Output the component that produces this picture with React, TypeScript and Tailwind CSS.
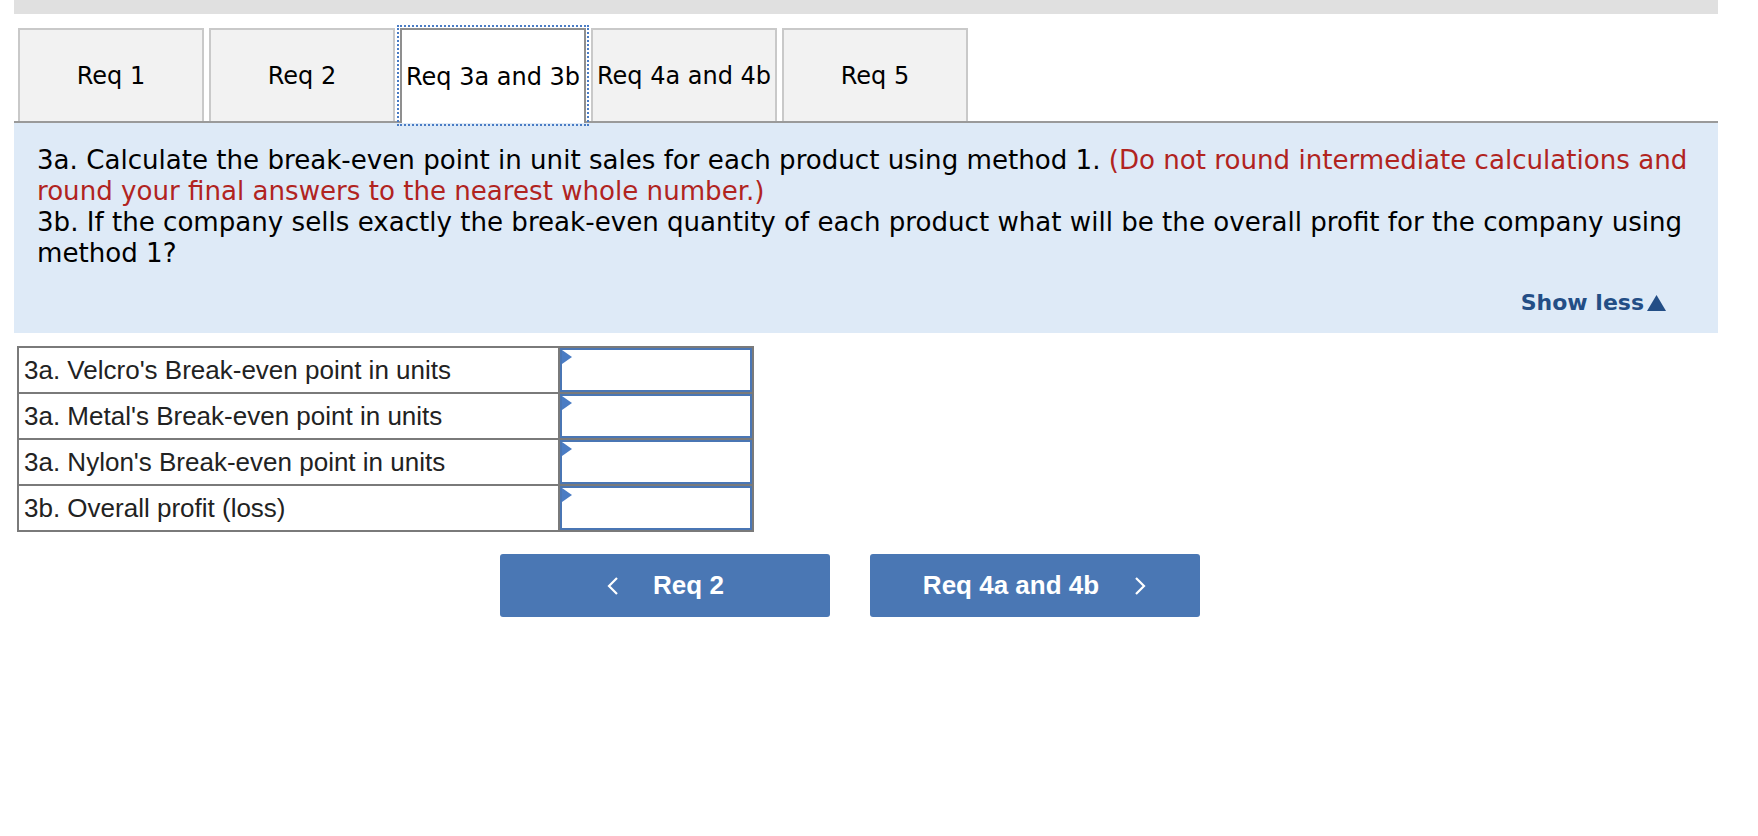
import React from 'react';

const tabs = ['Req 1', 'Req 2', 'Req 3a and 3b', 'Req 4a and 4b', 'Req 5'];
const activeTab = 2;

const rows = [
  "3a. Velcro's Break-even point in units",
  "3a. Metal's Break-even point in units",
  "3a. Nylon's Break-even point in units",
  '3b. Overall profit (loss)',
];

const ChevronLeft = () => (
  <svg width="14" height="20" viewBox="0 0 14 20" fill="none" stroke="currentColor" strokeWidth={2.2}>
    <path d="M11 2 L3 10 L11 18" />
  </svg>
);

const ChevronRight = () => (
  <svg width="14" height="20" viewBox="0 0 14 20" fill="none" stroke="currentColor" strokeWidth={2.2}>
    <path d="M3 2 L11 10 L3 18" />
  </svg>
);

export default function App() {
  return (
    <div className="w-[1758px] min-h-[836px] bg-white">
      <div className="ml-[14px] w-[1704px]">
        <div className="h-[14px] bg-[#e0e0e0]" />

        {/* tab strip */}
        <div className="mt-[14px] flex gap-[5px] pl-[4px] border-b-2 border-[#9a9a9a] font-['DejaVu_Sans',Verdana,sans-serif] text-[24px] text-black">
          {tabs.map((t, i) =>
            i === activeTab ? (
              <div
                key={t}
                className="relative z-10 -mb-[2px] flex h-[95px] w-[186px] items-center justify-center border-2 border-b-0 border-[#8f8f8f] bg-white outline-2 outline-dotted outline-[#4a7cc4] outline-offset-[1px] whitespace-nowrap"
              >
                {t}
              </div>
            ) : (
              <div
                key={t}
                className="flex h-[93px] w-[186px] items-center justify-center border-2 border-b-0 border-[#c9c9c9] bg-[#f2f2f2] whitespace-nowrap"
              >
                {t}
              </div>
            )
          )}
        </div>

        {/* instructions */}
        <div className="bg-[#deeaf7] pl-[23px] pr-[10px] pt-[22px] pb-[15px] font-['DejaVu_Sans',Verdana,sans-serif]">
          <p className="text-[26.1px] leading-[31px] text-black">
            3a. Calculate the break-even point in unit sales for each product using method 1.{' '}
            <span className="text-[#b1241f]">
              (Do not round intermediate calculations and round your final answers to the nearest whole number.)
            </span>
            <br />
            3b. If the company sells exactly the break-even quantity of each product what will be the overall profit for the company using method 1?
          </p>
          <div className="mt-[18px] flex justify-end pr-[42px]">
            <button className="flex items-center gap-[3px] text-[22px] leading-[31px] font-bold text-[#234e86]">
              Show less
              <svg width="19" height="16" viewBox="0 0 19 16">
                <path d="M9.5 0 L19 16 L0 16 Z" fill="currentColor" />
              </svg>
            </button>
          </div>
        </div>

        {/* answer table */}
        <table className="mt-[13px] ml-[3px] border-collapse border-2 border-[#7a7a7a] font-['Liberation_Sans',Arial,sans-serif] text-[26px] text-[#222]">
          <tbody>
            {rows.map((r) => (
              <tr key={r} className="h-[46px]">
                <td className="w-[541px] border-2 border-[#7a7a7a] pl-[5px] align-middle leading-none">{r}</td>
                <td className="w-[194px] border-2 border-[#7a7a7a] p-0">
                  <div className="relative h-[44px] w-full border-2 border-[#4a76b4] bg-white">
                    <svg className="absolute left-0 top-0" width="10" height="14" viewBox="0 0 10 14">
                      <path d="M0 0 L10 7 L0 14 Z" fill="#4a7cc4" />
                    </svg>
                  </div>
                </td>
              </tr>
            ))}
          </tbody>
        </table>

        {/* nav buttons */}
        <div className="mt-[22px] ml-[486px] flex gap-[40px] font-['Liberation_Sans',Arial,sans-serif] text-[26px] font-bold text-white">
          <button className="flex h-[63px] w-[330px] items-center justify-center gap-[33px] rounded-[3px] bg-[#4a77b4]">
            <ChevronLeft />
            <span>Req 2</span>
          </button>
          <button className="flex h-[63px] w-[330px] items-center justify-center gap-[34px] rounded-[3px] bg-[#4a77b4]">
            <span>Req 4a and 4b</span>
            <ChevronRight />
          </button>
        </div>
      </div>
    </div>
  );
}
